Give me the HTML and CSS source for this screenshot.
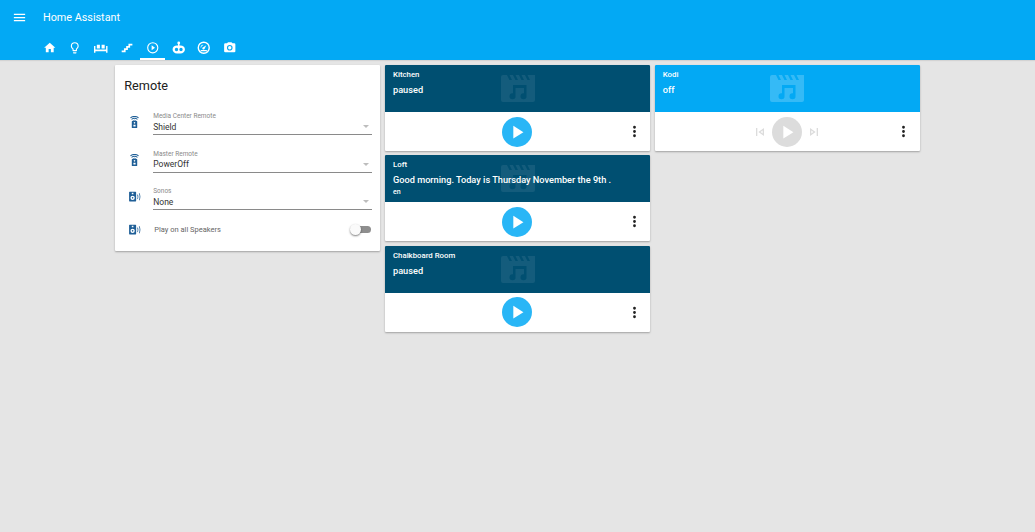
FILE: index.html
```html
<!DOCTYPE html>
<html lang="en">
<head>
<meta charset="utf-8">
<title>Home Assistant</title>
<link rel="stylesheet" href="styles.css">
</head>
<body>
<header class="header">
  <div class="toolbar">
    <svg class="menu-icon" viewBox="0 0 24 24"><path d="M3,6H21V8H3V6M3,11H21V13H3V11M3,16H21V18H3V16Z"/></svg>
    <div class="app-title">Home Assistant</div>
  </div>
  <nav class="tabs">
    <div class="tab"><svg viewBox="0 0 24 24"><path d="M10,20V14H14V20H19V12H22L12,3L2,12H5V20H10Z"/></svg></div>
    <div class="tab"><svg viewBox="0 0 24 24"><path d="M12,2A7,7 0 0,1 19,9C19,11.38 17.81,13.47 16,14.74V17A1,1 0 0,1 15,18H9A1,1 0 0,1 8,17V14.74C6.19,13.47 5,11.38 5,9A7,7 0 0,1 12,2M9,21V20H15V21A1,1 0 0,1 14,22H10A1,1 0 0,1 9,21M12,4A5,5 0 0,0 7,9C7,11.05 8.23,12.81 10,13.58V16H14V13.58C15.77,12.81 17,11.05 17,9A5,5 0 0,0 12,4Z"/></svg></div>
    <div class="tab"><svg viewBox="0 0 24 24"><path d="M0,9H2.500V15H21.500V9H24V21H21.500V18H2.500V21H0V9M5,6.500H10.500V13.500H5V6.500M13.500,6.500H19V13.500H13.500V6.500Z"/></svg></div>
    <div class="tab"><svg viewBox="0 0 24 24"><path d="M15,5V9H11V13H7V17H3V20H10V16H14V12H18V8H22V5H15Z"/></svg></div>
    <div class="tab tab-active"><svg viewBox="0 0 24 24"><path d="M10,16.5L16,12L10,7.5V16.5M12,20C7.59,20 4,16.41 4,12C4,7.59 7.59,4 12,4C16.41,4 20,7.59 20,12C20,16.41 16.41,20 12,20M12,2A10,10 0 0,0 2,12A10,10 0 0,0 12,22A10,10 0 0,0 22,12A10,10 0 0,0 12,2Z"/></svg></div>
    <div class="tab"><svg viewBox="0 0 24 24"><path fill-rule="evenodd" d="M12,1A2.500,2.500 0 0,1 14.500,3.500C14.500,4.400 14,5.200 13.300,5.600V8H15C19.500,8 23,10.800 23,15C23,19.200 19.500,22 15,22H9C4.500,22 1,19.200 1,15C1,10.800 4.500,8 9,8H10.700V5.600C10,5.200 9.500,4.400 9.500,3.500A2.500,2.500 0 0,1 12,1M8,12A3,3 0 0,0 8,18A3,3 0 0,0 8,12M16,12A3,3 0 0,0 16,18A3,3 0 0,0 16,12Z"/></svg></div>
    <div class="tab"><svg viewBox="0 0 24 24"><path fill-rule="evenodd" d="M12,1A11,11 0 0,0 1,12A11,11 0 0,0 12,23A11,11 0 0,0 23,12A11,11 0 0,0 12,1M12,3.500A8.500,8.500 0 0,1 20.500,12A8.500,8.500 0 0,1 3.500,12A8.500,8.500 0 0,1 12,3.500M16.500,7.500L13.800,13.500A2.200,2.200 0 1,1 10.900,11L16.500,7.500M6,11.500A6,6 0 0,1 11,6V7.500A4.500,4.500 0 0,0 7.500,11.500H6M6.500,16H17.500V18H6.500V16Z"/></svg></div>
    <div class="tab"><svg viewBox="0 0 24 24"><path d="M4,4H7L9,2H15L17,4H20A2,2 0 0,1 22,6V18A2,2 0 0,1 20,20H4A2,2 0 0,1 2,18V6A2,2 0 0,1 4,4M12,7A5,5 0 0,0 7,12A5,5 0 0,0 12,17A5,5 0 0,0 17,12A5,5 0 0,0 12,7M12,9A3,3 0 0,1 15,12A3,3 0 0,1 12,15A3,3 0 0,1 9,12A3,3 0 0,1 12,9Z"/></svg></div>
  </nav>
</header>

<main class="columns">
  <section class="column">
    <div class="card remote">
      <h2 class="remote-title">Remote</h2>
      <div class="row row-select">
        <svg class="state-icon" viewBox="0 0 24 24"><path d="M8,11H16A1,1 0 0,1 17,12V23A1,1 0 0,1 16,24H8A1,1 0 0,1 7,23V12A1,1 0 0,1 8,11M12,13A1.5,1.5 0 1,0 12,16A1.5,1.5 0 1,0 12,13M10,18V21H14V18H10M6,7.2C9.5,4.6 14.500,4.600 18,7.200L17,8.700C14,6.600 10,6.600 7,8.700L6,7.200M8.500,9.800C10.500,8.500 13.500,8.500 15.500,9.800L14.700,10.800C13,9.900 11,9.900 9.300,10.800L8.500,9.800M4,4.500C8.500,1 15.500,1 20,4.500L19,6C15,3 9,3 5,6L4,4.500Z"/></svg>
        <div class="select">
          <div class="select-label">Media Center Remote</div>
          <div class="select-value"><span>Shield</span><i class="caret"></i></div>
        </div>
      </div>
      <div class="row row-select">
        <svg class="state-icon" viewBox="0 0 24 24"><path d="M8,11H16A1,1 0 0,1 17,12V23A1,1 0 0,1 16,24H8A1,1 0 0,1 7,23V12A1,1 0 0,1 8,11M12,13A1.5,1.5 0 1,0 12,16A1.5,1.5 0 1,0 12,13M10,18V21H14V18H10M6,7.2C9.5,4.6 14.500,4.600 18,7.200L17,8.700C14,6.600 10,6.600 7,8.700L6,7.200M8.500,9.800C10.500,8.500 13.500,8.500 15.500,9.800L14.700,10.800C13,9.900 11,9.900 9.300,10.800L8.500,9.800M4,4.500C8.500,1 15.500,1 20,4.500L19,6C15,3 9,3 5,6L4,4.500Z"/></svg>
        <div class="select">
          <div class="select-label">Master Remote</div>
          <div class="select-value"><span>PowerOff</span><i class="caret"></i></div>
        </div>
      </div>
      <div class="row row-select">
        <svg class="state-icon" viewBox="0 0 24 24"><path fill-rule="evenodd" d="M3,3H14A1,1 0 0,1 15,4V20A1,1 0 0,1 14,21H3A1,1 0 0,1 2,20V4A1,1 0 0,1 3,3M7,5V8H10V5H7M8.500,10.500A4,4 0 1,0 8.500,18.500A4,4 0 1,0 8.500,10.500M8.500,13A1.500,1.500 0 1,1 8.500,16A1.500,1.500 0 1,1 8.500,13M17,9L18,8C19.500,10.500 19.500,14.500 18,17L17,16C18,14 18,11 17,9M20,6.500L21,5.500C23.500,9.500 23.500,15.500 21,19.500L20,18.500C22,15 22,10 20,6.500Z"/></svg>
        <div class="select">
          <div class="select-label">Sonos</div>
          <div class="select-value"><span>None</span><i class="caret"></i></div>
        </div>
      </div>
      <div class="row row-toggle">
        <svg class="state-icon" viewBox="0 0 24 24"><path fill-rule="evenodd" d="M3,3H14A1,1 0 0,1 15,4V20A1,1 0 0,1 14,21H3A1,1 0 0,1 2,20V4A1,1 0 0,1 3,3M7,5V8H10V5H7M8.500,10.500A4,4 0 1,0 8.500,18.500A4,4 0 1,0 8.500,10.500M8.500,13A1.500,1.500 0 1,1 8.500,16A1.500,1.500 0 1,1 8.500,13M17,9L18,8C19.500,10.500 19.500,14.500 18,17L17,16C18,14 18,11 17,9M20,6.500L21,5.500C23.500,9.500 23.500,15.500 21,19.500L20,18.500C22,15 22,10 20,6.500Z"/></svg>
        <div class="toggle-label">Play on all Speakers</div>
        <div class="toggle"><i class="toggle-track"></i><i class="toggle-thumb"></i></div>
      </div>
    </div>
  </section>

  <section class="column">
    <div class="card player">
      <div class="hero hero-dark">
        <svg class="hero-art" viewBox="0 0 34 27"><path fill-rule="evenodd" d="M2,0H6L8.500,5H11L8.500,0H12L14.500,5H17L14.500,0H18L20.500,5H23L20.500,0H24L26.500,5H29L26.500,0H34V25A2,2 0 0,1 32,27H2A2,2 0 0,1 0,25V2A2,2 0 0,1 2,0M12,10V18.300A3,3 0 1,0 14.500,21V13H23V18.300A3,3 0 1,0 25.500,21V10H12Z"/></svg>
        <div class="hero-name">Kitchen</div>
        <div class="hero-state">paused</div>
      </div>
      <div class="controls">
        <div class="play-btn"><svg viewBox="0 0 24 24"><path d="M8,5.140V19.140L19,12.140L8,5.140Z"/></svg></div>
        <svg class="more" viewBox="0 0 24 24"><path d="M12,16A2,2 0 0,1 14,18A2,2 0 0,1 12,20A2,2 0 0,1 10,18A2,2 0 0,1 12,16M12,10A2,2 0 0,1 14,12A2,2 0 0,1 12,14A2,2 0 0,1 10,12A2,2 0 0,1 12,10M12,4A2,2 0 0,1 14,6A2,2 0 0,1 12,8A2,2 0 0,1 10,6A2,2 0 0,1 12,4Z"/></svg>
      </div>
    </div>
    <div class="card player">
      <div class="hero hero-dark">
        <svg class="hero-art" viewBox="0 0 34 27"><path fill-rule="evenodd" d="M2,0H6L8.500,5H11L8.500,0H12L14.500,5H17L14.500,0H18L20.500,5H23L20.500,0H24L26.500,5H29L26.500,0H34V25A2,2 0 0,1 32,27H2A2,2 0 0,1 0,25V2A2,2 0 0,1 2,0M12,10V18.300A3,3 0 1,0 14.500,21V13H23V18.300A3,3 0 1,0 25.500,21V10H12Z"/></svg>
        <div class="hero-name">Loft</div>
        <div class="hero-state">Good morning. Today is Thursday November the 9th .</div>
        <div class="hero-sub">en</div>
      </div>
      <div class="controls">
        <div class="play-btn"><svg viewBox="0 0 24 24"><path d="M8,5.140V19.140L19,12.140L8,5.140Z"/></svg></div>
        <svg class="more" viewBox="0 0 24 24"><path d="M12,16A2,2 0 0,1 14,18A2,2 0 0,1 12,20A2,2 0 0,1 10,18A2,2 0 0,1 12,16M12,10A2,2 0 0,1 14,12A2,2 0 0,1 12,14A2,2 0 0,1 10,12A2,2 0 0,1 12,10M12,4A2,2 0 0,1 14,6A2,2 0 0,1 12,8A2,2 0 0,1 10,6A2,2 0 0,1 12,4Z"/></svg>
      </div>
    </div>
    <div class="card player">
      <div class="hero hero-dark">
        <svg class="hero-art" viewBox="0 0 34 27"><path fill-rule="evenodd" d="M2,0H6L8.500,5H11L8.500,0H12L14.500,5H17L14.500,0H18L20.500,5H23L20.500,0H24L26.500,5H29L26.500,0H34V25A2,2 0 0,1 32,27H2A2,2 0 0,1 0,25V2A2,2 0 0,1 2,0M12,10V18.300A3,3 0 1,0 14.500,21V13H23V18.300A3,3 0 1,0 25.500,21V10H12Z"/></svg>
        <div class="hero-name">Chalkboard Room</div>
        <div class="hero-state">paused</div>
      </div>
      <div class="controls">
        <div class="play-btn"><svg viewBox="0 0 24 24"><path d="M8,5.140V19.140L19,12.140L8,5.140Z"/></svg></div>
        <svg class="more" viewBox="0 0 24 24"><path d="M12,16A2,2 0 0,1 14,18A2,2 0 0,1 12,20A2,2 0 0,1 10,18A2,2 0 0,1 12,16M12,10A2,2 0 0,1 14,12A2,2 0 0,1 12,14A2,2 0 0,1 10,12A2,2 0 0,1 12,10M12,4A2,2 0 0,1 14,6A2,2 0 0,1 12,8A2,2 0 0,1 10,6A2,2 0 0,1 12,4Z"/></svg>
      </div>
    </div>
  </section>

  <section class="column">
    <div class="card player">
      <div class="hero hero-light">
        <svg class="hero-art" viewBox="0 0 34 27"><path fill-rule="evenodd" d="M2,0H6L8.500,5H11L8.500,0H12L14.500,5H17L14.500,0H18L20.500,5H23L20.500,0H24L26.500,5H29L26.500,0H34V25A2,2 0 0,1 32,27H2A2,2 0 0,1 0,25V2A2,2 0 0,1 2,0M12,10V18.300A3,3 0 1,0 14.500,21V13H23V18.300A3,3 0 1,0 25.500,21V10H12Z"/></svg>
        <div class="hero-name">Kodi</div>
        <div class="hero-state">off</div>
      </div>
      <div class="controls controls-off">
        <svg class="skip" viewBox="0 0 24 24"><path d="M6,18V6H8V18H6M9.500,12L18,6V18L9.500,12M16,14.140V9.860L13,12L16,14.140Z"/></svg>
        <div class="play-btn play-off"><svg viewBox="0 0 24 24"><path d="M8,5.140V19.140L19,12.140L8,5.140Z"/></svg></div>
        <svg class="skip" viewBox="0 0 24 24"><path d="M16,18H18V6H16M6,18L14.500,12L6,6M8,9.860L11,12L8,14.140V9.860Z"/></svg>
        <svg class="more" viewBox="0 0 24 24"><path d="M12,16A2,2 0 0,1 14,18A2,2 0 0,1 12,20A2,2 0 0,1 10,18A2,2 0 0,1 12,16M12,10A2,2 0 0,1 14,12A2,2 0 0,1 12,14A2,2 0 0,1 10,12A2,2 0 0,1 12,10M12,4A2,2 0 0,1 14,6A2,2 0 0,1 12,8A2,2 0 0,1 10,6A2,2 0 0,1 12,4Z"/></svg>
      </div>
    </div>
  </section>
</main>
</body>
</html>
```

FILE: styles.css
```css
* { box-sizing: border-box; }

html, body {
  margin: 0;
  height: 100%;
}

body {
  background: #e5e5e5;
  font-family: Roboto, "Noto Sans", sans-serif;
  color: #212121;
  overflow: hidden;
}

.header {
  height: 60px;
  background: #03a9f4;
  color: #fff;
  box-shadow: 0 1px 1px rgba(0, 0, 0, 0.08);
}

.toolbar {
  height: 34px;
  display: flex;
  align-items: center;
  padding-left: 12px;
}

.menu-icon {
  width: 15px;
  height: 15px;
  fill: #fff;
}

.app-title {
  margin-left: 16px;
  padding-top: 1px;
  font-size: 10.800px;
  line-height: 14px;
}

.tabs {
  height: 26px;
  display: flex;
  padding-left: 36.500px;
}

.tab {
  width: 25.800px;
  height: 26px;
  display: flex;
  align-items: center;
  justify-content: center;
  padding-top: 1px;
}

.tab svg {
  width: 13.500px;
  height: 13.500px;
  fill: #fff;
}

.tab-active {
  box-shadow: inset 0 -2px 0 #fff;
}

.columns {
  display: flex;
  justify-content: center;
  gap: 4.750px;
  padding-top: 5px;
}

.column {
  width: 265px;
  display: flex;
  flex-direction: column;
  gap: 4.400px;
}

.card {
  background: #fff;
  border-radius: 1px;
  box-shadow: 0 1px 2px rgba(0, 0, 0, 0.3);
  overflow: hidden;
}

.remote {
  height: 186px;
  padding: 12px 8px 0 9px;
}

.remote-title {
  margin: 0;
  font-size: 12.700px;
  font-weight: 400;
  line-height: 17px;
  height: 35px;
}

.row {
  display: flex;
  align-items: center;
}

.row-select {
  height: 23px;
  align-items: flex-start;
}

.row-select + .row-select {
  margin-top: 14.500px;
}

.state-icon {
  width: 13px;
  height: 13px;
  margin: 3px 12px 0 4px;
  fill: #1f5f97;
  flex: none;
}

.select {
  flex: 1;
}

.select-label {
  font-size: 6.500px;
  line-height: 8px;
  color: #8a8a8a;
}

.select-value {
  display: flex;
  justify-content: space-between;
  align-items: center;
  height: 15px;
  padding-bottom: 1px;
  font-size: 8.500px;
  line-height: 12px;
  color: #333;
  border-bottom: 1px solid #8a8a8a;
  padding-right: 3px;
}

.caret {
  width: 0;
  height: 0;
  border-left: 3px solid transparent;
  border-right: 3px solid transparent;
  border-top: 3px solid #bdbdbd;
}

.row-toggle {
  height: 20px;
  margin-top: 9px;
}

.row-toggle .state-icon {
  margin-top: 0;
  margin-right: 13px;
}

.toggle-label {
  flex: 1;
  font-size: 7.500px;
  color: #666;
}

.toggle {
  position: relative;
  width: 21px;
  height: 11px;
  margin-right: 1px;
}

.toggle-track {
  position: absolute;
  left: 2px;
  top: 2px;
  width: 19px;
  height: 7px;
  border-radius: 4px;
  background: #8e8e8e;
}

.toggle-thumb {
  position: absolute;
  left: 0;
  top: 0;
  width: 11px;
  height: 11px;
  border-radius: 50%;
  background: #fafafa;
  box-shadow: 0 1px 2px rgba(0, 0, 0, 0.5);
}

.player {
  height: 86px;
  display: flex;
  flex-direction: column;
}

.hero {
  position: relative;
  height: 47px;
  padding: 5px 8px 0;
  color: #fff;
  flex: none;
}

.hero-dark {
  background: #004f71;
}

.hero-light {
  background: #03a9f4;
}

.hero-art {
  position: absolute;
  left: 115.500px;
  top: 10px;
  width: 34px;
  height: 27px;
  fill: rgba(255, 255, 255, 0.2);
}

.hero-dark .hero-art {
  fill: rgba(255, 255, 255, 0.08);
}

.hero-name {
  position: relative;
  font-size: 7.800px;
  font-weight: 500;
  line-height: 9px;
}

.hero-state {
  position: relative;
  margin-top: 5px;
  font-size: 9.200px;
  font-weight: 500;
  line-height: 11px;
}

.hero-sub {
  position: relative;
  margin-top: 3px;
  font-size: 7px;
  font-weight: 500;
  line-height: 9px;
}

.controls {
  position: relative;
  flex: 1;
  display: flex;
  align-items: center;
  justify-content: center;
  gap: 4px;
}

.play-btn {
  width: 30px;
  height: 30px;
  border-radius: 50%;
  background: #29b6f6;
  display: flex;
  align-items: center;
  justify-content: center;
  margin-right: 1px;
}

.play-btn svg {
  width: 22px;
  height: 22px;
  fill: #fff;
}

.play-off {
  background: #dcdcdc;
  margin-right: 0;
}

.controls-off {
  padding-right: 1px;
}

.skip {
  width: 16px;
  height: 16px;
  fill: #dcdcdc;
}

.more {
  position: absolute;
  right: 7.500px;
  top: 11px;
  width: 17px;
  height: 17px;
  fill: #212121;
}
```
